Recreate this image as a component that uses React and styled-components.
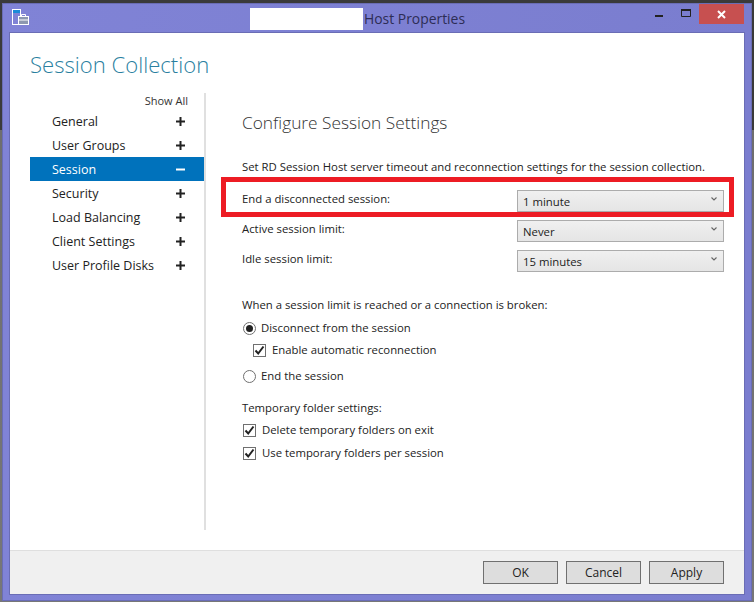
import React from "react";
import styled, { createGlobalStyle } from "styled-components";

const Global = createGlobalStyle`
  html, body { margin: 0; padding: 0; background: #4a4a4a; }
  * { box-sizing: border-box; }
`;

const FONT = `"Open Sans", "Noto Sans", "Liberation Sans", sans-serif`;

const Page = styled.div`
  width: 754px;
  height: 602px;
  padding: 3px 2px 1px 2px;
  background: linear-gradient(to bottom, #3a3a3a 0, #3a3a3a 130px, #6e6e6e 130px, #777 100%);
  font-family: ${FONT};
  font-size: 11.35px;
  color: #222;
  overflow: hidden;
`;

const Frame = styled.div`
  width: 750px;
  height: 598px;
  display: flex;
  flex-direction: column;
  background: linear-gradient(to right, #8083d6, #7a7dcf);
  border: 1px solid #6a6db5;
`;

const TitleBar = styled.div`
  height: 29px;
  flex: none;
  display: flex;
  padding: 0 7px 0 9px;
`;

const AppIcon = styled.svg`
  width: 17px;
  height: 17px;
  margin-top: 5px;
  flex: none;
`;

const TitleArea = styled.div`
  display: flex;
  margin-left: 221px;
  margin-top: 4px;
  height: 22px;
`;

const Redaction = styled.div`
  width: 113px;
  height: 22px;
  background: #fff;
`;

const TitleText = styled.div`
  margin-left: 1px;
  font-size: 13.9px;
  line-height: 22px;
  color: #2d2d55;
`;

const Controls = styled.div`
  margin-left: auto;
  display: flex;
  align-items: flex-start;
`;

const CtrlIcon = styled.svg`
  width: 26px;
  height: 20px;
  flex: none;
`;

const CloseBtn = styled.div`
  width: 45px;
  height: 20px;
  background: #c75050;
  display: flex;
  align-items: center;
  justify-content: center;
`;

const Client = styled.div`
  margin: 0 7px 6px 7px;
  flex: 1;
  min-height: 0;
  display: flex;
  flex-direction: column;
  background: #fff;
  outline: 1px solid #6a6db5;
`;

const Body = styled.div`
  flex: 1;
  min-height: 0;
  display: flex;
  flex-direction: column;
  padding: 0 20px 20px 20px;
`;

const Heading = styled.h1`
  margin: 16px 0 0 0;
  height: 44px;
  font-weight: 300;
  font-size: 22.1px;
  line-height: 30px;
  color: #2a7f9f;
`;

const Columns = styled.div`
  flex: 1;
  min-height: 0;
  display: flex;
`;

const Sidebar = styled.nav`
  width: 176px;
  flex: none;
  border-right: 2px solid #e0e0e0;
`;

const ShowAll = styled.div`
  height: 16px;
  padding-right: 16px;
  text-align: right;
  font-size: 11px;
  line-height: 16px;
  color: #333;
`;

const NavRow = styled.div`
  height: 24px;
  display: flex;
  align-items: center;
  justify-content: space-between;
  padding: 0 19px 0 22px;
  font-size: 12.5px;
  background: ${(p) => (p.$active ? "#0072bc" : "transparent")};
  color: ${(p) => (p.$active ? "#fff" : "#222")};
`;

const Sign = styled.svg`
  width: 9px;
  height: 9px;
  flex: none;
`;

const Content = styled.main`
  flex: 1;
  min-width: 0;
  padding: 18px 0 0 36px;
`;

const Subheading = styled.h2`
  margin: 0;
  font-weight: 300;
  font-size: 17.3px;
  line-height: 24px;
  color: #333;
`;

const Line = styled.div`
  margin-top: ${(p) => p.$top}px;
  line-height: 18px;
  height: 18px;
  white-space: nowrap;
`;

const FormRows = styled.div`
  position: relative;
  margin-top: 14px;
`;

const Highlight = styled.div`
  position: absolute;
  left: -21px;
  right: -10px;
  top: -13px;
  height: 40px;
  border: 5px solid #ed1c24;
  pointer-events: none;
`;

const FormRow = styled.div`
  height: 30px;
  display: flex;
  justify-content: space-between;
`;

const FormLabel = styled.label`
  line-height: 18px;
`;

const Select = styled.div`
  width: 207px;
  height: 22px;
  display: flex;
  align-items: center;
  justify-content: space-between;
  padding: 0 6px 0 5px;
  border: 1px solid #acacac;
  background: linear-gradient(to bottom, #f0f0f0, #e5e5e5);
  color: #222;
`;

const Chevron = styled.svg`
  width: 6px;
  height: 4px;
  margin-bottom: 4px;
`;

const Option = styled.div`
  margin-top: ${(p) => p.$top}px;
  margin-left: ${(p) => p.$indent || 0}px;
  height: 18px;
  display: flex;
  align-items: center;
  line-height: 18px;
  white-space: nowrap;
`;

const Radio = styled.span`
  width: 13px;
  height: 13px;
  margin: 0 5px 0 1px;
  flex: none;
  border-radius: 50%;
  border: 1px solid #707070;
  background: #fff;
  display: flex;
  align-items: center;
  justify-content: center;
  &::after {
    content: "";
    display: ${(p) => (p.$on ? "block" : "none")};
    width: 7px;
    height: 7px;
    border-radius: 50%;
    background: #222;
  }
`;

const Check = styled.span`
  width: 13px;
  height: 13px;
  margin: 0 6px 0 1px;
  flex: none;
  border: 1px solid #707070;
  background: #fff;
  display: flex;
  align-items: center;
  justify-content: center;
`;

const CheckMark = styled.svg`
  width: 11px;
  height: 11px;
`;

const Footer = styled.footer`
  height: 44px;
  flex: none;
  display: flex;
  justify-content: flex-end;
  gap: 8px;
  padding: 10px 20px 0 0;
  background: #f0f0f0;
  border-top: 1px solid #dfdfdf;
`;

const Button = styled.button`
  width: 75px;
  height: 23px;
  padding: 0;
  border: 1px solid #707070;
  background: #dddddd;
  font-family: ${FONT};
  font-size: 12px;
  color: #222;
`;

const Plus = () => (
  <Sign viewBox="0 0 9 9"><path d="M0 3.5h3.5V0h2v3.5H9v2H5.5V9h-2V5.5H0z" fill="#222" /></Sign>
);
const Minus = () => (
  <Sign viewBox="0 0 9 9"><path d="M0 3.5h9v2H0z" fill="#fff" /></Sign>
);
const Tick = () => (
  <CheckMark viewBox="0 0 11 11"><path d="M1.5 5.5 L4.2 8.5 L9.5 1.5" fill="none" stroke="#222" strokeWidth="2" /></CheckMark>
);
const Caret = () => (
  <Chevron viewBox="0 0 6 4"><path d="M0.5 0.5 L3 3 L5.5 0.5" fill="none" stroke="#666" strokeWidth="1.1" /></Chevron>
);

const nav = ["General", "User Groups", "Session", "Security", "Load Balancing", "Client Settings", "User Profile Disks"];
const rows = [
  ["End a disconnected session:", "1 minute"],
  ["Active session limit:", "Never"],
  ["Idle session limit:", "15 minutes"],
];

export default function App() {
  return (
    <Page>
      <Global />
      <Frame>
        <TitleBar>
          <AppIcon viewBox="0 0 17 17">
            <rect x="0.5" y="0.5" width="8" height="15" fill="#8083d6" stroke="#fff" />
            <rect x="1" y="1" width="7" height="3" fill="#1c8ad8" />
            <rect x="6.5" y="7.5" width="10" height="8" fill="#8d98b0" stroke="#fff" />
            <path d="M9.5 7.5V5.5h4v2M7 11h9" fill="none" stroke="#fff" />
          </AppIcon>
          <TitleArea>
            <Redaction />
            <TitleText>Host Properties</TitleText>
          </TitleArea>
          <Controls>
            <CtrlIcon viewBox="0 0 26 20"><rect x="8" y="11" width="8" height="2" fill="#222" /></CtrlIcon>
            <CtrlIcon viewBox="0 0 26 20"><path d="M8.5 5.5h9v7h-9z" fill="none" stroke="#222" /><rect x="8" y="5" width="10" height="2" fill="#222" /></CtrlIcon>
            <CloseBtn>
              <svg width="9" height="9" viewBox="0 0 9 9"><path d="M1 1l7 7M8 1l-7 7" stroke="#fff" strokeWidth="2" /></svg>
            </CloseBtn>
          </Controls>
        </TitleBar>
        <Client>
          <Body>
            <Heading>Session Collection</Heading>
            <Columns>
              <Sidebar>
                <ShowAll>Show All</ShowAll>
                {nav.map((n) => (
                  <NavRow key={n} $active={n === "Session"}>
                    <span>{n}</span>
                    {n === "Session" ? <Minus /> : <Plus />}
                  </NavRow>
                ))}
              </Sidebar>
              <Content>
                <Subheading>Configure Session Settings</Subheading>
                <Line $top={23}>Set RD Session Host server timeout and reconnection settings for the session collection.</Line>
                <FormRows>
                  <Highlight />
                  {rows.map(([l, v]) => (
                    <FormRow key={l}>
                      <FormLabel>{l}</FormLabel>
                      <Select>
                        <span>{v}</span>
                        <Caret />
                      </Select>
                    </FormRow>
                  ))}
                </FormRows>
                <Line $top={16}>When a session limit is reached or a connection is broken:</Line>
                <Option $top={5}><Radio $on />Disconnect from the session</Option>
                <Option $top={4} $indent={10}><Check><Tick /></Check>Enable automatic reconnection</Option>
                <Option $top={8}><Radio />End the session</Option>
                <Line $top={14}>Temporary folder settings:</Line>
                <Option $top={4}><Check><Tick /></Check>Delete temporary folders on exit</Option>
                <Option $top={5}><Check><Tick /></Check>Use temporary folders per session</Option>
              </Content>
            </Columns>
          </Body>
          <Footer>
            <Button>OK</Button>
            <Button>Cancel</Button>
            <Button>Apply</Button>
          </Footer>
        </Client>
      </Frame>
    </Page>
  );
}
